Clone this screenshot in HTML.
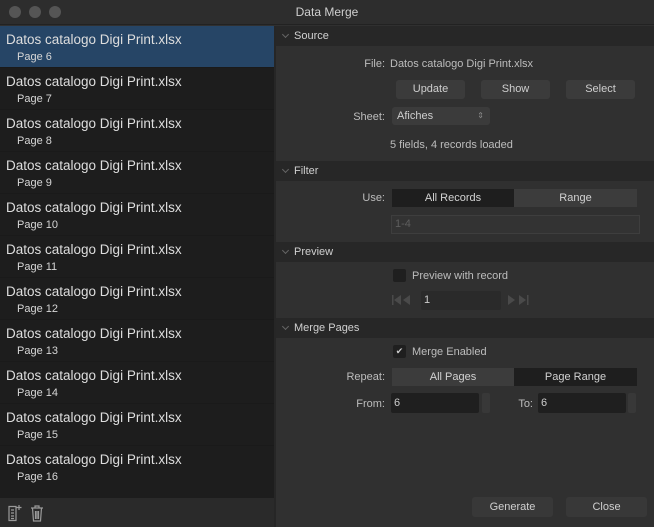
<!DOCTYPE html>
<html><head><style>
*{margin:0;padding:0;box-sizing:border-box}
body{width:654px;height:527px;background:#303030;font-family:"Liberation Sans",sans-serif;position:relative;overflow:hidden;color:#ccc}
.a{position:absolute}
.title{left:0;top:0;width:654px;height:25px;background:#2d2d2d;border-bottom:1px solid #222;text-align:center;font-size:12px;line-height:24px;color:#cfcfcf}
.dot{top:6px;width:12px;height:12px;border-radius:50%;background:#555}
.list{left:0;top:26px;width:274px;height:472px;background:#1d1d1d}
.item{position:absolute;left:0;width:274px;height:42px;border-bottom:1px solid #1a1a1a}
.item .t{position:absolute;left:6px;top:6px;font-size:13.5px;color:#dedede}
.item .p{position:absolute;left:17px;top:25px;font-size:11px;color:#d6d6d6}
.sel{background:#264566}
.bot{left:0;top:498px;width:275px;height:29px;background:#2a2a2a}
.div{left:274px;top:26px;width:2px;height:501px;background:#262626}
.hd{left:276px;width:378px;height:20px;background:#272727;font-size:11px;line-height:20px;color:#d0d0d0;padding-left:18px}
.hd:before{content:"";position:absolute;left:7px;top:6px;width:4px;height:4px;border-right:1px solid #666;border-bottom:1px solid #666;transform:rotate(45deg)}
.lbl{font-size:11px;color:#bdbdbd;text-align:right}
.btn{background:#3b3b3b;border-radius:3px;font-size:11px;color:#cfcfcf;text-align:center;line-height:19px;height:19px}
.seg{font-size:11px;text-align:center;line-height:18px;height:18px;color:#d2d2d2}
.fld{background:#1f1f1f;border-radius:2px;font-size:11px;color:#ccc;padding-left:3px;line-height:20px}
.cb{width:13px;height:13px;background:#1f1f1f;border-radius:2px}
</style></head><body>
<div class="a title">Data Merge</div>
<div class="a dot" style="left:9px"></div><div class="a dot" style="left:29px"></div><div class="a dot" style="left:49px"></div>
<div class="a list">
<div class="item sel" style="top:0"><div class="t">Datos catalogo Digi Print.xlsx</div><div class="p">Page 6</div></div>
<div class="item" style="top:42px"><div class="t">Datos catalogo Digi Print.xlsx</div><div class="p">Page 7</div></div>
<div class="item" style="top:84px"><div class="t">Datos catalogo Digi Print.xlsx</div><div class="p">Page 8</div></div>
<div class="item" style="top:126px"><div class="t">Datos catalogo Digi Print.xlsx</div><div class="p">Page 9</div></div>
<div class="item" style="top:168px"><div class="t">Datos catalogo Digi Print.xlsx</div><div class="p">Page 10</div></div>
<div class="item" style="top:210px"><div class="t">Datos catalogo Digi Print.xlsx</div><div class="p">Page 11</div></div>
<div class="item" style="top:252px"><div class="t">Datos catalogo Digi Print.xlsx</div><div class="p">Page 12</div></div>
<div class="item" style="top:294px"><div class="t">Datos catalogo Digi Print.xlsx</div><div class="p">Page 13</div></div>
<div class="item" style="top:336px"><div class="t">Datos catalogo Digi Print.xlsx</div><div class="p">Page 14</div></div>
<div class="item" style="top:378px"><div class="t">Datos catalogo Digi Print.xlsx</div><div class="p">Page 15</div></div>
<div class="item" style="top:420px;border:none"><div class="t">Datos catalogo Digi Print.xlsx</div><div class="p">Page 16</div></div>
</div>
<div class="a bot"></div>
<svg class="a" style="left:8px;top:504px" width="40" height="18" viewBox="0 0 40 18" fill="none" stroke="#9a9a9a" stroke-width="1.2">
<path d="M1 2.5h7v14H1z"/><path d="M3 6h3M3 9h3M3 12h3M3 14.5h3"/><path d="M11 1v5M8.5 3.5h5"/>
<path d="M23 4h12M27 4V2h4v2M24.5 4l1 13h7l1-13M27.5 7v8M29 7v8M30.5 7v8"/>
</svg>
<div class="a div"></div>

<div class="a hd" style="top:26px">Source</div>
<div class="a lbl" style="left:330px;top:58px;width:55px">File:</div>
<div class="a" style="left:390px;top:58px;font-size:11px;color:#bdbdbd">Datos catalogo Digi Print.xlsx</div>
<div class="a btn" style="left:396px;top:80px;width:69px">Update</div>
<div class="a btn" style="left:481px;top:80px;width:69px">Show</div>
<div class="a btn" style="left:566px;top:80px;width:69px">Select</div>
<div class="a lbl" style="left:330px;top:111px;width:55px">Sheet:</div>
<div class="a btn" style="left:392px;top:107px;width:98px;height:18px;line-height:18px;text-align:left;padding-left:5px">Afiches<span style="position:absolute;right:6px;top:0;font-size:8px;color:#888">⇕</span></div>
<div class="a" style="left:390px;top:139px;font-size:11px;color:#bdbdbd">5 fields, 4 records loaded</div>

<div class="a hd" style="top:161px">Filter</div>
<div class="a lbl" style="left:330px;top:192px;width:55px">Use:</div>
<div class="a seg" style="left:392px;top:189px;width:122px;background:#1e1e1e">All Records</div>
<div class="a seg" style="left:514px;top:189px;width:123px;background:#3c3c3c">Range</div>
<div class="a" style="left:391px;top:215px;width:249px;height:19px;background:#333;border:1px solid #3e3e3e;font-size:11px;color:#5e5e5e;padding-left:3px;line-height:17px">1-4</div>

<div class="a hd" style="top:242px">Preview</div>
<div class="a cb" style="left:393px;top:269px"></div>
<div class="a" style="left:412px;top:270px;font-size:11px;color:#bdbdbd">Preview with record</div>
<svg class="a" style="left:392px;top:294px" width="24" height="12" viewBox="0 0 24 12" fill="#4a4a4a"><rect x="0" y="1" width="1.5" height="10"/><path d="M2 6l7-5v10z"/><path d="M11 6l7-5v10z"/></svg>
<div class="a fld" style="left:421px;top:291px;width:80px;height:19px;background:#2a2a2a;line-height:19px">1</div>
<svg class="a" style="left:507px;top:294px" width="24" height="12" viewBox="0 0 24 12" fill="#4a4a4a"><path d="M1 1l7 5-7 5z"/><path d="M12 1l7 5-7 5z"/><rect x="20" y="1" width="1.5" height="10"/></svg>

<div class="a hd" style="top:318px">Merge Pages</div>
<div class="a cb" style="left:393px;top:345px;color:#ccc;font-size:9px;text-align:center;line-height:13px">✔</div>
<div class="a" style="left:412px;top:346px;font-size:11px;color:#bdbdbd">Merge Enabled</div>
<div class="a lbl" style="left:320px;top:371px;width:65px">Repeat:</div>
<div class="a seg" style="left:392px;top:368px;width:122px;background:#3c3c3c">All Pages</div>
<div class="a seg" style="left:514px;top:368px;width:123px;background:#1e1e1e">Page Range</div>
<div class="a lbl" style="left:330px;top:398px;width:55px">From:</div>
<div class="a fld" style="left:391px;top:393px;width:88px;height:20px">6</div>
<div class="a" style="left:482px;top:393px;width:8px;height:20px;background:#383838;border-radius:2px"></div>
<div class="a lbl" style="left:500px;top:398px;width:33px">To:</div>
<div class="a fld" style="left:538px;top:393px;width:88px;height:20px">6</div>
<div class="a" style="left:628px;top:393px;width:8px;height:20px;background:#383838;border-radius:2px"></div>

<div class="a btn" style="left:472px;top:497px;width:81px;height:20px;line-height:20px;background:#383838">Generate</div>
<div class="a btn" style="left:566px;top:497px;width:81px;height:20px;line-height:20px;background:#383838">Close</div>
</body></html>
